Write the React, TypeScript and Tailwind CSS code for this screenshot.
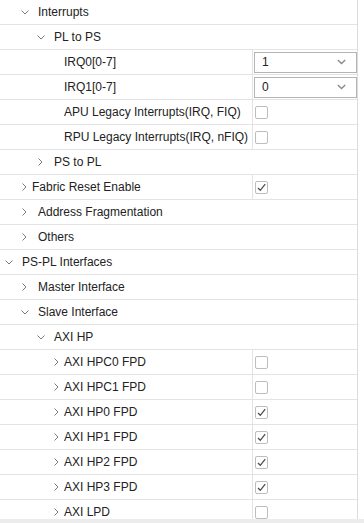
import React from "react";

type Value =
  | { kind: "select"; value: string }
  | { kind: "check"; checked: boolean }
  | null;

type Row = {
  label: string;
  chev: "down" | "right" | null;
  pad: string; // left padding before chevron/text
  box: string; // width reserved for the chevron
  value: Value;
};

const rows: Row[] = [
  { label: "Interrupts", chev: "down", pad: "pl-[21px]", box: "w-[17px]", value: null },
  { label: "PL to PS", chev: "down", pad: "pl-[37px]", box: "w-[17px]", value: null },
  { label: "IRQ0[0-7]", chev: null, pad: "pl-[64px]", box: "w-0", value: { kind: "select", value: "1" } },
  { label: "IRQ1[0-7]", chev: null, pad: "pl-[64px]", box: "w-0", value: { kind: "select", value: "0" } },
  { label: "APU Legacy Interrupts(IRQ, FIQ)", chev: null, pad: "pl-[64px]", box: "w-0", value: { kind: "check", checked: false } },
  { label: "RPU Legacy Interrupts(IRQ, nFIQ)", chev: null, pad: "pl-[64px]", box: "w-0", value: { kind: "check", checked: false } },
  { label: "PS to PL", chev: "right", pad: "pl-[38px]", box: "w-[16px]", value: null },
  { label: "Fabric Reset Enable", chev: "right", pad: "pl-[22px]", box: "w-[10px]", value: { kind: "check", checked: true } },
  { label: "Address Fragmentation", chev: "right", pad: "pl-[22px]", box: "w-[16px]", value: null },
  { label: "Others", chev: "right", pad: "pl-[22px]", box: "w-[16px]", value: null },
  { label: "PS-PL Interfaces", chev: "down", pad: "pl-[5px]", box: "w-[17px]", value: null },
  { label: "Master Interface", chev: "right", pad: "pl-[22px]", box: "w-[16px]", value: null },
  { label: "Slave Interface", chev: "down", pad: "pl-[21px]", box: "w-[17px]", value: null },
  { label: "AXI HP", chev: "down", pad: "pl-[37px]", box: "w-[17px]", value: null },
  { label: "AXI HPC0 FPD", chev: "right", pad: "pl-[54px]", box: "w-[10px]", value: { kind: "check", checked: false } },
  { label: "AXI HPC1 FPD", chev: "right", pad: "pl-[54px]", box: "w-[10px]", value: { kind: "check", checked: false } },
  { label: "AXI HP0 FPD", chev: "right", pad: "pl-[54px]", box: "w-[10px]", value: { kind: "check", checked: true } },
  { label: "AXI HP1 FPD", chev: "right", pad: "pl-[54px]", box: "w-[10px]", value: { kind: "check", checked: true } },
  { label: "AXI HP2 FPD", chev: "right", pad: "pl-[54px]", box: "w-[10px]", value: { kind: "check", checked: true } },
  { label: "AXI HP3 FPD", chev: "right", pad: "pl-[54px]", box: "w-[10px]", value: { kind: "check", checked: true } },
  { label: "AXI LPD", chev: "right", pad: "pl-[54px]", box: "w-[10px]", value: { kind: "check", checked: false } },
];

function Chevron({ dir }: { dir: "down" | "right" }) {
  if (dir === "down") {
    return (
      <svg width="8" height="5" viewBox="0 0 8 5" className="block">
        <polyline points="0.5,0.5 4,4 7.5,0.5" fill="none" stroke="#7a7a7a" strokeWidth="1" />
      </svg>
    );
  }
  return (
    <svg width="5" height="8" viewBox="0 0 5 8" className="block">
      <polyline points="0.5,0.5 4,4 0.5,7.5" fill="none" stroke="#7a7a7a" strokeWidth="1" />
    </svg>
  );
}

function Checkbox({ checked }: { checked: boolean }) {
  return (
    <div className="w-[13px] h-[13px] ml-[2px] border border-[#bdbdbd] rounded-[2px] bg-white flex items-center justify-center">
      {checked && (
        <svg width="11" height="11" viewBox="0 0 11 11">
          <path d="M2 6 L4.3 8.3 L9.2 2.2" fill="none" stroke="#4d4d4d" strokeWidth="1.3" />
        </svg>
      )}
    </div>
  );
}

function Select({ value }: { value: string }) {
  return (
    <div className="ml-[1px] w-[103px] h-[21px] border border-[#b4b4b4] bg-white flex items-center justify-between pl-[7px] pr-[10px]">
      <span>{value}</span>
      <svg width="9" height="6" viewBox="0 0 9 6">
        <polyline points="0.8,1 4.5,4.6 8.2,1" fill="none" stroke="#8a8a8a" strokeWidth="1.4" />
      </svg>
    </div>
  );
}

export default function App() {
  return (
    <div
      className="w-[364px] h-[523px] bg-white flex flex-col text-[12px] text-[#222]"
      style={{ fontFamily: '"Liberation Sans", Arial, sans-serif' }}
    >
      <div className="h-[519px] overflow-hidden">
        <div className="w-[358px] border-r border-[#dcdcdc] flex flex-col">
          {rows.map((r) => (
            <div key={r.label} className="h-[25px] border-b border-[#e3e3e3] flex">
              <div className={`w-[252px] shrink-0 flex items-center whitespace-nowrap ${r.pad}`}>
                {r.chev && (
                  <div className={`${r.box} shrink-0 flex items-center`}>
                    <Chevron dir={r.chev} />
                  </div>
                )}
                <span>{r.label}</span>
              </div>
              {r.value && (
                <div className="flex-1 border-l border-[#e3e3e3] flex items-center">
                  {r.value.kind === "select" ? (
                    <Select value={r.value.value} />
                  ) : (
                    <Checkbox checked={r.value.checked} />
                  )}
                </div>
              )}
            </div>
          ))}
        </div>
      </div>
      <div className="h-[4px] bg-[#ececec]" />
    </div>
  );
}
